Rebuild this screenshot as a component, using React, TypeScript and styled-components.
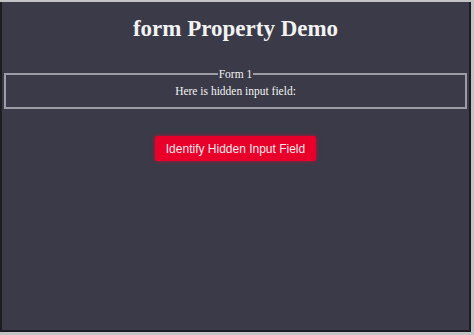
import React from 'react';
import styled, {createGlobalStyle} from "styled-components";

const GlobalStyle = createGlobalStyle`
  html, body {
    margin: 0;
    padding: 0;
    background: #c4c4c6;
  }
`

export default function App() {
    return (
        <>
            <GlobalStyle/>
            <Frame>
                <Page>
                    <Title>form Property Demo</Title>
                    <FormBox>
                        <Legend>Form 1</Legend>
                        <Label>Here is hidden input field:</Label>
                        <input type="hidden" value="hidden"/>
                    </FormBox>
                    <Actions>
                        <IdentifyButton type="button">Identify Hidden Input Field</IdentifyButton>
                    </Actions>
                </Page>
            </Frame>
        </>
    );
}

const Frame = styled.div`
  height: 335px;
  box-sizing: border-box;
  padding: 2px 3px 3px 0;
  background: #c4c4c6;
`

const Page = styled.div`
  height: 100%;
  box-sizing: border-box;
  background: #3a3a48;
  border-left: 2px solid #1c1c22;
  border-right: 2px solid #1c1c22;
  border-bottom: 2px solid #1c1c22;
  padding: 0 2px;
  font-family: "Liberation Serif", "Times New Roman", serif;
  color: #f2f2f2;
`

const Title = styled.h1`
  margin: 0;
  padding-top: 13px;
  text-align: center;
  font-size: 23px;
  font-weight: bold;
  line-height: 28px;
`

const FormBox = styled.fieldset`
  margin: 24px 0 0;
  padding: 3px 8px 9px;
  border: 2px solid #9c9ca6;
  text-align: center;
`

const Legend = styled.legend`
  margin: 0 auto;
  padding: 0 1px;
  font-size: 11.5px;
  line-height: 14px;
`

const Label = styled.div`
  font-size: 11.5px;
  line-height: 14px;
`

const Actions = styled.div`
  display: flex;
  justify-content: center;
  padding-top: 27px;
`

const IdentifyButton = styled.button`
  width: 161px;
  height: 25px;
  padding: 0;
  border: none;
  border-radius: 2px;
  background: #e8002a;
  color: #f6e8ea;
  font-family: "Liberation Sans", Arial, sans-serif;
  font-size: 12px;
  box-shadow: 0 0 4px rgba(240, 0, 50, 0.7);
  cursor: pointer;
`
